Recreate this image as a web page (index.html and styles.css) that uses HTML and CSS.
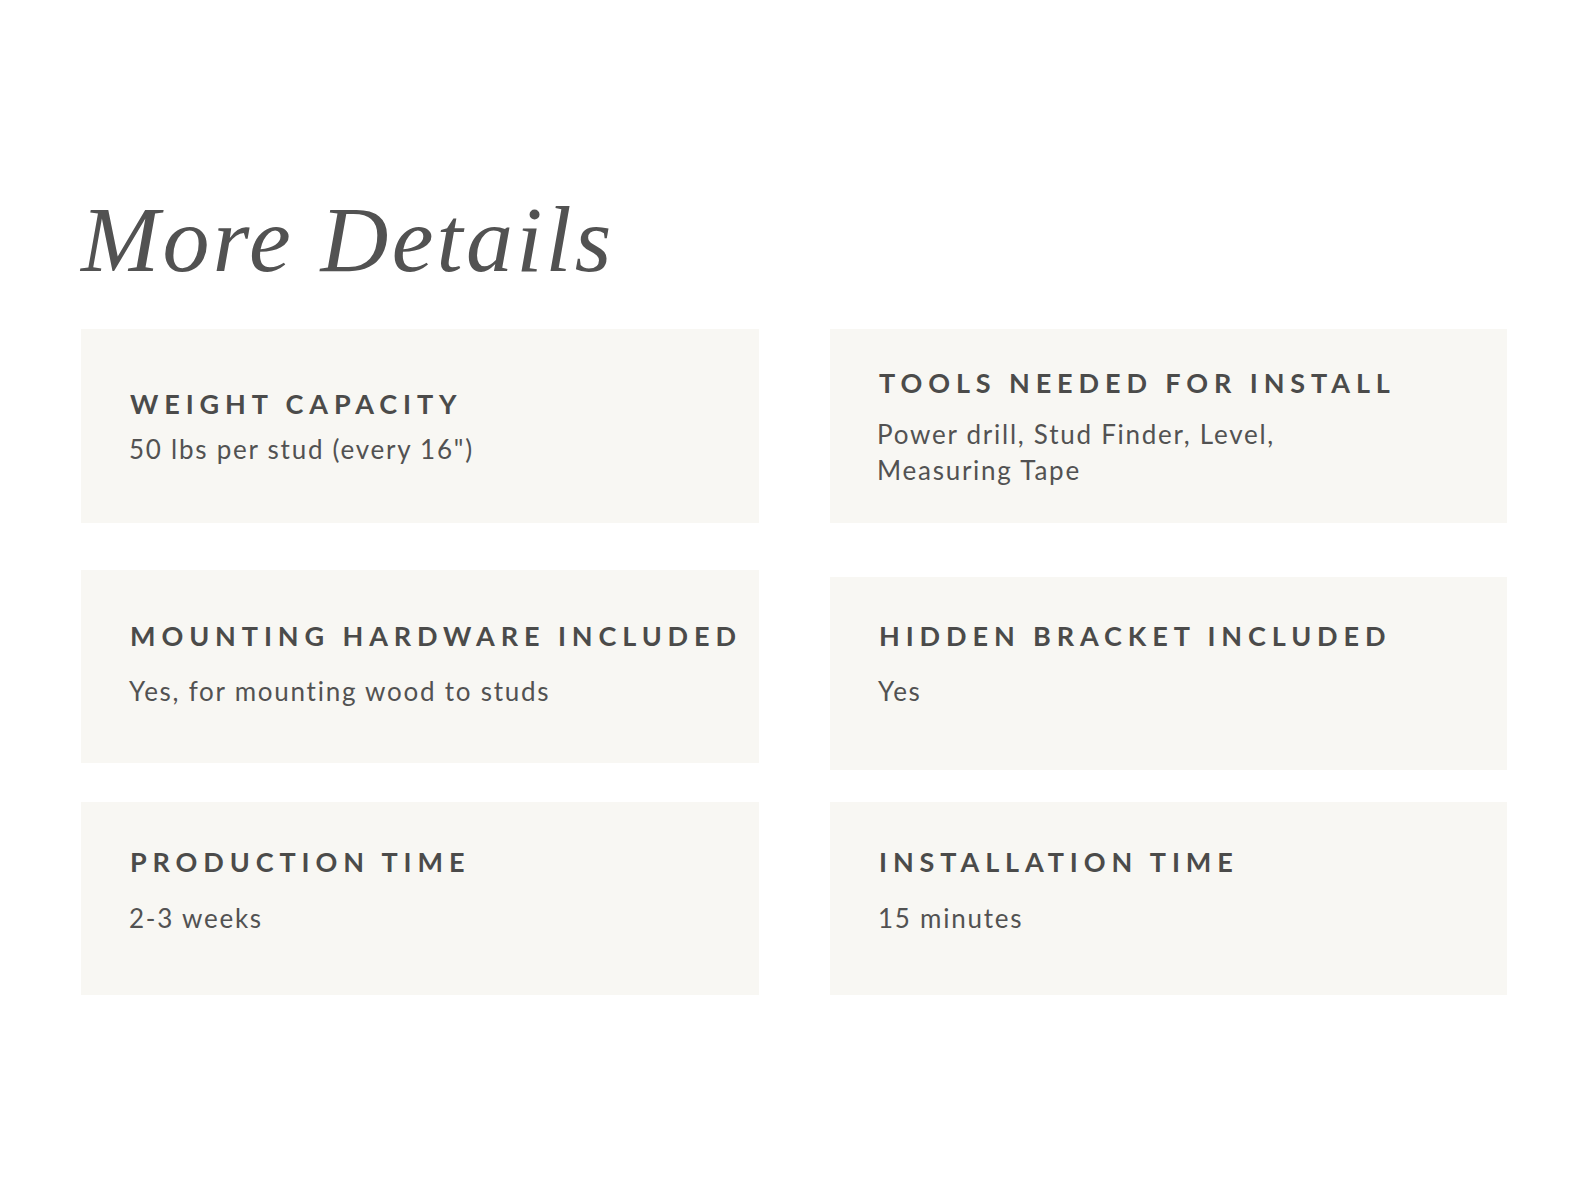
FILE: index.html
```html
<!DOCTYPE html>
<html lang="en">
<head>
<meta charset="utf-8">
<title>More Details</title>
<link rel="stylesheet" href="styles.css">
</head>
<body>
<main class="page">
  <h1 class="title">More Details</h1>
  <section class="grid">
    <div class="card card-weight">
      <div class="label">Weight Capacity</div>
      <div class="value">50 lbs per stud (every 16")</div>
    </div>
    <div class="card card-tools">
      <div class="label">Tools Needed for Install</div>
      <div class="value">Power drill, Stud Finder, Level,<br>Measuring Tape</div>
    </div>
    <div class="card card-hardware">
      <div class="label">Mounting Hardware Included</div>
      <div class="value">Yes, for mounting wood to studs</div>
    </div>
    <div class="card card-bracket">
      <div class="label">Hidden Bracket Included</div>
      <div class="value">Yes</div>
    </div>
    <div class="card card-production">
      <div class="label">Production Time</div>
      <div class="value">2-3 weeks</div>
    </div>
    <div class="card card-install">
      <div class="label">Installation Time</div>
      <div class="value">15 minutes</div>
    </div>
  </section>
</main>
</body>
</html>
```
FILE: styles.css
```css
html, body {
  margin: 0;
  padding: 0;
  background: #ffffff;
}

.page {
  padding: 192px 0 0 81px;
  font-family: Lato, "Open Sans", sans-serif;
  color: #505050;
}

.title {
  margin: 0 0 43px 0;
  font-family: "Liberation Serif", "Times New Roman", serif;
  font-style: italic;
  font-weight: 400;
  font-size: 94px;
  line-height: 94px;
  letter-spacing: 3.2px;
  color: #525252;
}

.grid {
  display: grid;
  grid-template-columns: 678px 677px;
  column-gap: 71px;
  align-items: start;
}

.card {
  box-sizing: border-box;
  height: 193px;
  padding-left: 48px;
  background: #f8f7f3;
}

.label {
  padding-left: 1px;
  font-weight: 700;
  font-size: 27px;
  line-height: 27px;
  letter-spacing: 5.9px;
  text-transform: uppercase;
  white-space: nowrap;
  color: #4b4b4a;
}

.value {
  font-weight: 400;
  font-size: 26px;
  line-height: 36px;
  letter-spacing: 1.75px;
  color: #525252;
}

.card-weight {
  height: 194px;
  padding-top: 61px;
}
.card-weight .value { margin-top: 14px; }

.card-tools {
  height: 194px;
  padding-top: 40px;
  padding-left: 47px;
}
.card-tools .label { padding-left: 2px; }
.card-tools .value { margin-top: 20px; }

.card-hardware {
  margin-top: 47px;
  padding-top: 52px;
}
.card-hardware .value { margin-top: 24px; }

.card-bracket {
  margin-top: 54px;
  padding-top: 45px;
}
.card-bracket .value { margin-top: 24px; }

.card-production,
.card-install {
  margin-top: 32px;
  padding-top: 46px;
}
.card-production .value,
.card-install .value { margin-top: 25px; }
```
